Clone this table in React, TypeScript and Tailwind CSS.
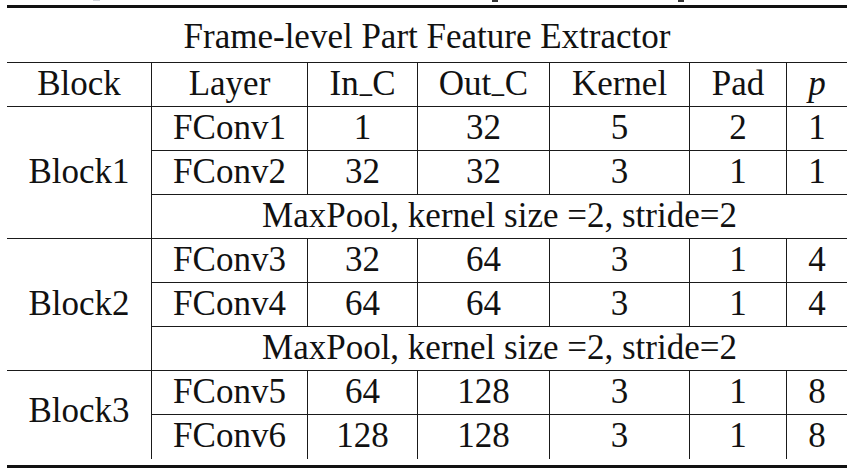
import React from 'react';

const rows1 = [
  ['FConv1', '1', '32', '5', '2', '1'],
  ['FConv2', '32', '32', '3', '1', '1'],
];
const rows2 = [
  ['FConv3', '32', '64', '3', '1', '4'],
  ['FConv4', '64', '64', '3', '1', '4'],
];
const rows3 = [
  ['FConv5', '64', '128', '3', '1', '8'],
  ['FConv6', '128', '128', '3', '1', '8'],
];

function Cell({ children, last, noBottom }: { children: React.ReactNode; last?: boolean; noBottom?: boolean }) {
  return (
    <div
      className={`flex h-[44px] items-center justify-center pb-[3px] border-[#1a1a1a] ${last ? '' : 'border-r'} ${noBottom ? '' : 'border-b'}`}
    >
      {children}
    </div>
  );
}

function DataRows({ rows, lastGroup }: { rows: string[][]; lastGroup?: boolean }) {
  return (
    <>
      {rows.map((r, i) => {
        const noBottom = lastGroup && i === rows.length - 1;
        return r.map((v, j) => (
          <Cell key={`${i}-${j}`} last={j === r.length - 1} noBottom={noBottom}>
            {v}
          </Cell>
        ));
      })}
    </>
  );
}

function MaxPool() {
  return (
    <div className="col-span-6 flex h-[44px] items-center justify-center pb-[3px] border-b border-[#1a1a1a]">
      MaxPool, kernel size =2, stride=2
    </div>
  );
}

// LaTeX-style underscore sitting on the baseline
function Sub({ a, b }: { a: string; b: string }) {
  return (
    <span>
      {a}
      <span className="relative top-[-4px] inline-block -mx-[2px] scale-x-[0.7]">_</span>
      {b}
    </span>
  );
}

export default function App() {
  return (
    <div className="w-[858px] h-[473px] bg-white text-[#111] font-['Liberation_Serif',serif] text-[35px] leading-none overflow-hidden">
      {/* cut-off caption descenders */}
      <div className="flex h-[5px] items-start">
        <span className="ml-[93px] w-[7px] h-[1px] bg-gray-300" />
        <span className="ml-[392px] w-[6px] h-[2px] bg-[#333]" />
        <span className="ml-[180px] w-[6px] h-[2px] bg-[#333]" />
      </div>

      <div className="ml-[7px] w-[840px]">
        <div className="h-[3px] bg-[#111]" />

        <div className="grid grid-cols-[145px_156px_110px_132px_140px_97px_60px]">
          <div className="col-span-7 flex h-[55px] items-center justify-center pt-[2px] border-b border-[#1a1a1a]">
            Frame-level Part Feature Extractor
          </div>

          <Cell>Block</Cell>
          <Cell>Layer</Cell>
          <Cell>
            <Sub a="In" b="C" />
          </Cell>
          <Cell>
            <Sub a="Out" b="C" />
          </Cell>
          <Cell>Kernel</Cell>
          <Cell>Pad</Cell>
          <Cell last>
            <span className="italic">p</span>
          </Cell>

          <div className="row-span-3 flex items-center justify-center pb-[2px] border-r border-b border-[#1a1a1a]">
            Block1
          </div>
          <DataRows rows={rows1} />
          <MaxPool />

          <div className="row-span-3 flex items-center justify-center pb-[2px] border-r border-b border-[#1a1a1a]">
            Block2
          </div>
          <DataRows rows={rows2} />
          <MaxPool />

          <div className="row-span-2 flex items-center justify-center pb-[10px] border-r border-[#1a1a1a]">
            Block3
          </div>
          <DataRows rows={rows3} lastGroup />
        </div>

        <div className="mt-[6px] h-[3px] bg-[#111]" />
      </div>
    </div>
  );
}
